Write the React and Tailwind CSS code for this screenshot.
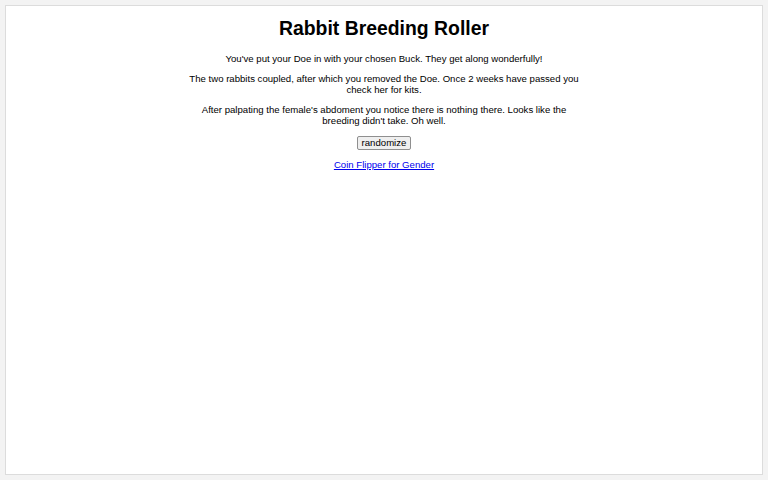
export default function App() {
  return (
    <div className="h-[480px] bg-[#f3f3f3] p-[5px] font-['Liberation_Sans',Arial,sans-serif] text-black">
      <div className="h-full border border-[#dcdcdc] bg-white">
        <div className="mx-auto w-[394px] text-center">
          <h1 className="pt-[10px] text-[19.4px] font-bold leading-[24px]">Rabbit Breeding Roller</h1>
          <p className="mt-[13px] text-[9.6px] leading-[11px]">
            You've put your Doe in with your chosen Buck. They get along wonderfully!
          </p>
          <p className="mt-[9px] text-[9.6px] leading-[11px]">
            The two rabbits coupled, after which you removed the Doe. Once 2 weeks have passed you check her for kits.
          </p>
          <p className="mt-[9px] text-[9.6px] leading-[11px]">
            After palpating the female's abdoment you notice there is nothing there. Looks like the breeding didn't take. Oh well.
          </p>
          <div className="mt-[3px]">
            <button className="rounded-[2px] border border-[#8f8f8f] bg-[#efefef] px-[4px] text-[9.6px] leading-[12px]">
              randomize
            </button>
          </div>
          <p className="mt-[6px] text-[9.6px] leading-[11px]">
            <a href="#" className="text-[#0000ee] underline">Coin Flipper for Gender</a>
          </p>
        </div>
      </div>
    </div>
  )
}
